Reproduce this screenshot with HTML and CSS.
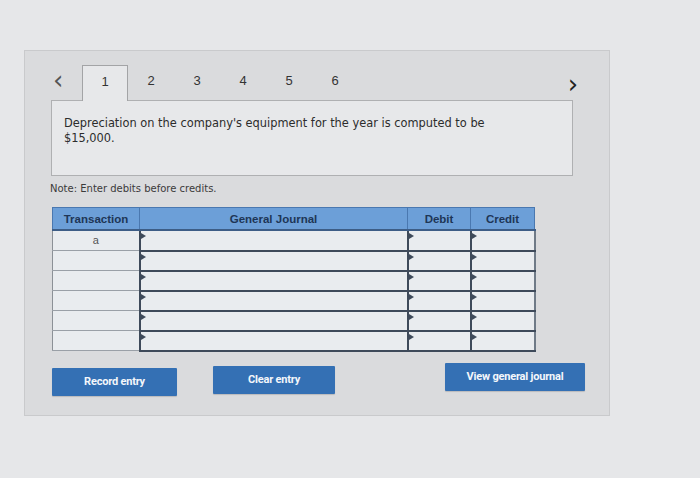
FILE: index.html
```html
<!DOCTYPE html>
<html>
<head>
<meta charset="utf-8">
<link rel="stylesheet" href="styles.css">
</head>
<body>
<div class="panel">
  <div class="tabs">
    <span class="arrow prev">&lsaquo;</span>
    <span class="tab active">1</span>
    <span class="tab">2</span>
    <span class="tab">3</span>
    <span class="tab">4</span>
    <span class="tab">5</span>
    <span class="tab">6</span>
    <span class="spacer"></span>
    <span class="arrow next">&rsaquo;</span>
  </div>
  <div class="question">
    Depreciation on the company's equipment for the year is computed to be<br>$15,000.
  </div>
  <div class="note">Note: Enter debits before credits.</div>
  <table class="journal">
    <thead>
      <tr>
        <th class="c-tr">Transaction</th>
        <th class="c-gj">General Journal</th>
        <th class="c-dr">Debit</th>
        <th class="c-cr">Credit</th>
      </tr>
    </thead>
    <tbody>
      <tr><td class="c-tr">a</td><td class="c-gj"><i class="flag"></i></td><td class="c-dr"><i class="flag"></i></td><td class="c-cr"><i class="flag"></i></td></tr>
      <tr><td class="c-tr"></td><td class="c-gj"><i class="flag"></i></td><td class="c-dr"><i class="flag"></i></td><td class="c-cr"><i class="flag"></i></td></tr>
      <tr><td class="c-tr"></td><td class="c-gj"><i class="flag"></i></td><td class="c-dr"><i class="flag"></i></td><td class="c-cr"><i class="flag"></i></td></tr>
      <tr><td class="c-tr"></td><td class="c-gj"><i class="flag"></i></td><td class="c-dr"><i class="flag"></i></td><td class="c-cr"><i class="flag"></i></td></tr>
      <tr><td class="c-tr"></td><td class="c-gj"><i class="flag"></i></td><td class="c-dr"><i class="flag"></i></td><td class="c-cr"><i class="flag"></i></td></tr>
      <tr><td class="c-tr"></td><td class="c-gj"><i class="flag"></i></td><td class="c-dr"><i class="flag"></i></td><td class="c-cr"><i class="flag"></i></td></tr>
    </tbody>
  </table>
  <div class="buttons">
    <button class="btn b-record">Record entry</button>
    <button class="btn b-clear">Clear entry</button>
    <button class="btn b-view">View general journal</button>
  </div>
</div>
</body>
</html>
```
FILE: styles.css
```css
html, body {
  margin: 0;
  padding: 0;
}
body {
  width: 700px;
  height: 478px;
  background: #e6e7e9;
  font-family: "DejaVu Sans", Verdana, sans-serif;
  overflow: hidden;
}
.panel {
  margin: 50px 0 0 24px;
  width: 586px;
  height: 366px;
  box-sizing: border-box;
  background: #dadbdd;
  border: 1px solid #c9cacc;
  padding: 14px 0 0 26px;
}
.tabs {
  display: flex;
  align-items: stretch;
  width: 522px;
  height: 36px;
  position: relative;
  z-index: 1;
  margin-bottom: -1px;
}
.arrow {
  font-family: "DejaVu Sans", sans-serif;
  font-size: 26px;
  line-height: 28px;
  color: #444;
  display: flex;
  align-items: center;
  justify-content: center;
}
.prev {
  width: 31px;
  box-sizing: border-box;
  justify-content: flex-start;
  padding-left: 2px;
  color: #555;
  padding-bottom: 6px;
}
.next {
  width: 20px;
  margin-right: -10px;
  color: #222;
  padding-top: 2px;
}
.spacer { flex: 1; }
.tab {
  width: 46px;
  display: flex;
  align-items: center;
  justify-content: center;
  font-family: "Liberation Sans", Arial, sans-serif;
  font-size: 13px;
  color: #333;
  padding-bottom: 5px;
  box-sizing: border-box;
}
.tab.active {
  background: #e7e8ea;
  border: 1px solid #a3a4a6;
  border-bottom: none;
}
.question {
  width: 522px;
  height: 76px;
  box-sizing: border-box;
  background: #e7e8ea;
  border: 1px solid #afb0b2;
  padding: 15px 0 0 12px;
  font-size: 11.4px;
  line-height: 15px;
  color: #2c2c2c;
}
.note {
  font-size: 10px;
  color: #3a3a3a;
  margin: 6px 0 0 -1px;
  height: 14px;
  line-height: 14px;
}
.journal {
  margin-top: 11px;
  margin-left: 1px;
  border-collapse: collapse;
  font-family: "Liberation Sans", Arial, sans-serif;
  table-layout: fixed;
  width: 478px;
}
.journal th {
  background: #6c9fd8;
  color: #1e3656;
  font-size: 11.5px;
  font-weight: bold;
  height: 21px;
  padding: 0;
  border: 1px solid #4a78b0;
  border-bottom: 2px solid #3d5d86;
}
.journal td {
  height: 18px;
  padding: 0;
  background: #e9ecef;
  border-bottom: 2px solid #3e4a5a;
  position: relative;
  vertical-align: top;
}
.journal .c-tr { width: 86px; }
.journal .c-gj { width: 267px; }
.journal .c-dr { width: 62px; }
.journal .c-cr { width: 63px; }
.journal td.c-tr {
  border-left: 1px solid #8c9197;
  border-bottom: 1px solid #9aa0a7;
  text-align: center;
  font-size: 11px;
  color: #555;
  line-height: 18px;
  height: 19px;
}
.journal td.c-gj {
  border-left: 2px solid #3e4a5a;
}
.journal td.c-dr {
  border-left: 2px solid #3e4a5a;
}
.journal td.c-cr {
  border-left: 2px solid #3e4a5a;
  border-right: 2px solid #6f7a87;
}
.flag {
  position: absolute;
  left: 0;
  top: 2px;
  width: 0;
  height: 0;
  border-top: 3px solid transparent;
  border-bottom: 3px solid transparent;
  border-left: 5px solid #3e4a5a;
}
.buttons {
  display: flex;
  align-items: flex-start;
  margin-top: 14px;
  padding-left: 1px;
}
.btn {
  height: 28px;
  border: none;
  border-radius: 1px;
  background: #3470b4;
  color: #f4f7fb;
  font-family: Roboto, "Liberation Sans", Arial, sans-serif;
  font-weight: bold;
  font-size: 11px;
  letter-spacing: -0.2px;
  padding: 0;
  box-shadow: 0 1px 1px rgba(0,0,0,0.15);
}
.b-record {
  width: 125px;
  margin-top: 2px;
}
.b-clear {
  width: 122px;
  margin-left: 36px;
}
.b-view {
  width: 140px;
  margin-left: 110px;
  margin-top: -3px;
}
```
